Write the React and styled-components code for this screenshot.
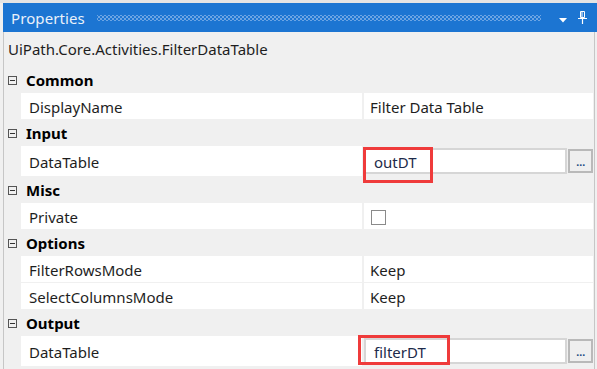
import { createGlobalStyle, styled } from 'styled-components';

const GlobalStyle = createGlobalStyle`
  html, body {
    margin: 0;
    padding: 0;
    background: #f0f0f0;
  }
  body {
    font-family: "Noto Sans", "Open Sans", sans-serif;
  }
`;

const Panel = styled.div`
  width: 597px;
  height: 369px;
  overflow: hidden;
  display: flex;
  flex-direction: column;
  background: #f0f0f0;
  border-top: 3px solid #e4e4e4;
  box-sizing: border-box;
`;

const TitleBar = styled.div`
  height: 29px;
  margin-left: 3px;
  background: #1c75d2;
  display: flex;
  align-items: center;
  padding: 0 10px 0 8px;
  gap: 12px;
  flex-shrink: 0;
`;

const Title = styled.span`
  color: #eaf1fa;
  font-size: 15px;
  letter-spacing: 0.1px;
`;

const Grip = styled.div`
  flex: 1;
  height: 6px;
  margin-right: 6px;
  background-image: radial-gradient(circle, #6ea6e4 0.7px, transparent 1px),
    radial-gradient(circle, #6ea6e4 0.7px, transparent 1px);
  background-size: 4px 4px;
  background-position: 0 0, 2px 2px;
`;

const TitleIcons = styled.div`
  display: flex;
  align-items: center;
  gap: 11px;
`;

const Body = styled.div`
  flex: 1;
  margin-left: 3px;
  margin-right: 2px;
  border-left: 1px solid #c6c6c6;
  border-right: 1px solid #c6c6c6;
  display: flex;
  flex-direction: column;
`;

const TypeName = styled.div`
  height: 34px;
  display: flex;
  align-items: center;
  padding-left: 4px;
  font-size: 15px;
  color: #1e1e1e;
  flex-shrink: 0;
`;

const Category = styled.div`
  height: 27px;
  display: flex;
  align-items: center;
  gap: 9px;
  padding-left: 4px;
  font-weight: bold;
  font-size: 15px;
  color: #000;
`;

const Toggle = styled.span`
  width: 7px;
  height: 7px;
  border: 1px solid #555;
  display: flex;
  align-items: center;
  justify-content: center;
  margin-top: 1px;
  &::after {
    content: '';
    width: 5px;
    height: 1px;
    background: #333;
  }
`;

const Rows = styled.div`
  display: flex;
  flex-direction: column;
  gap: 1px;
`;

const Row = styled.div`
  height: ${(p) => (p.$tall ? 30 : 26)}px;
  display: grid;
  grid-template-columns: 341px 229px;
  column-gap: 2px;
  padding-left: 17px;
`;

const NameCell = styled.div`
  background: #fff;
  display: flex;
  align-items: center;
  padding-left: 8px;
  padding-top: 2px;
  font-size: 15px;
  color: #1e1e1e;
`;

const ValueCell = styled.div`
  background: ${(p) => (p.$plain ? 'transparent' : '#fff')};
  display: flex;
  align-items: center;
  padding-left: ${(p) => (p.$plain ? 0 : 6)}px;
  padding-top: ${(p) => (p.$plain ? 0 : 2)}px;
  font-size: 15px;
  color: #1e1e1e;
  gap: 1px;
`;

const InputBox = styled.div`
  position: relative;
  flex: 1;
  height: 26px;
  box-sizing: border-box;
  background: #fff;
  border: 2px solid #d6d6d6;
  display: flex;
  align-items: center;
  padding: 2px 0 0 8px;
  color: #1d2a4a;
  font-size: 15px;
`;

const Highlight = styled.div`
  position: absolute;
  left: ${(p) => p.$left}px;
  top: ${(p) => p.$top}px;
  width: ${(p) => p.$width}px;
  height: ${(p) => p.$height}px;
  box-sizing: border-box;
  border: 3px solid #ef3b3b;
  pointer-events: none;
`;

const EllipsisButton = styled.button`
  width: 25px;
  height: 24px;
  box-sizing: border-box;
  margin: 0;
  padding: 0 0 3px;
  background: #efefef;
  border: 2px solid #b9b9b9;
  color: #2a4f86;
  font-family: "DejaVu Sans", sans-serif;
  font-weight: bold;
  font-size: 9px;
  letter-spacing: -0.5px;
  display: flex;
  align-items: flex-end;
  justify-content: center;
`;

const CheckBox = styled.span`
  width: 15px;
  height: 15px;
  box-sizing: border-box;
  border: 1px solid #8a8a8a;
  background: #fff;
  margin-left: 1px;
`;

function PinIcon() {
  return (
    <svg width="9" height="13" viewBox="0 0 9 13">
      <path d="M2.5 0.5h4v6h-4z" fill="none" stroke="#fff" strokeWidth="1" />
      <path d="M4 1v5" stroke="#fff" strokeWidth="1" />
      <path d="M0 7.5h9" stroke="#fff" strokeWidth="1" />
      <path d="M4.5 8v5" stroke="#fff" strokeWidth="1.2" />
    </svg>
  );
}

function DropIcon() {
  return (
    <svg width="8" height="5" viewBox="0 0 8 5" style={{ marginTop: 5 }}>
      <path d="M0 0h8L4 4.5z" fill="#fff" />
    </svg>
  );
}

function Section({ title, children }) {
  return (
    <>
      <Category>
        <Toggle />
        {title}
      </Category>
      <Rows>{children}</Rows>
    </>
  );
}

function InputValue({ value, box }) {
  return (
    <ValueCell $plain>
      <InputBox>
        {value}
        <Highlight $left={box.left} $top={box.top} $width={box.width} $height={box.height} />
      </InputBox>
      <EllipsisButton type="button">...</EllipsisButton>
    </ValueCell>
  );
}

export default function App() {
  return (
    <>
      <GlobalStyle />
      <Panel>
        <TitleBar>
          <Title>Properties</Title>
          <Grip />
          <TitleIcons>
            <DropIcon />
            <PinIcon />
          </TitleIcons>
        </TitleBar>
        <Body>
          <TypeName>UiPath.Core.Activities.FilterDataTable</TypeName>

          <Section title="Common">
            <Row>
              <NameCell>DisplayName</NameCell>
              <ValueCell>Filter Data Table</ValueCell>
            </Row>
          </Section>

          <Section title="Input">
            <Row $tall>
              <NameCell>DataTable</NameCell>
              <InputValue value="outDT" box={{ left: -3, top: -3, width: 70, height: 36 }} />
            </Row>
          </Section>

          <Section title="Misc">
            <Row>
              <NameCell>Private</NameCell>
              <ValueCell>
                <CheckBox />
              </ValueCell>
            </Row>
          </Section>

          <Section title="Options">
            <Row>
              <NameCell>FilterRowsMode</NameCell>
              <ValueCell>Keep</ValueCell>
            </Row>
            <Row>
              <NameCell>SelectColumnsMode</NameCell>
              <ValueCell>Keep</ValueCell>
            </Row>
          </Section>

          <Section title="Output">
            <Row $tall>
              <NameCell>DataTable</NameCell>
              <InputValue value="filterDT" box={{ left: -8, top: -5, width: 92, height: 30 }} />
            </Row>
          </Section>
        </Body>
      </Panel>
    </>
  );
}
